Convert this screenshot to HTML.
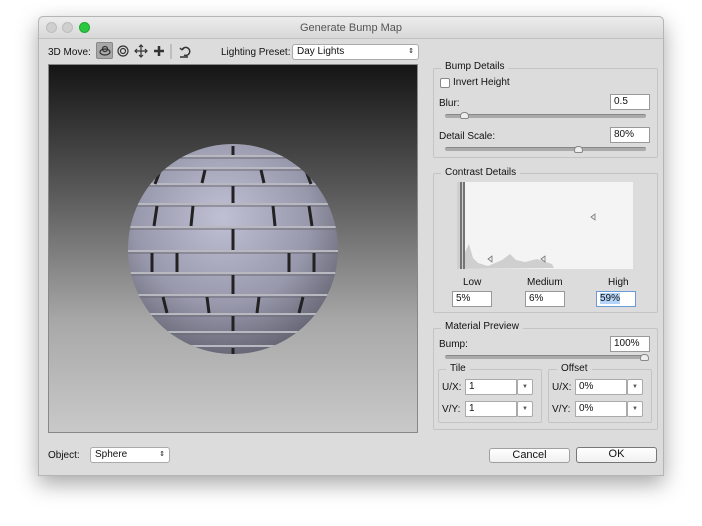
<!DOCTYPE html>
<html><head><meta charset="utf-8"><style>
*{box-sizing:border-box;margin:0;padding:0}
body{width:702px;height:526px;background:#fff;font-family:"Liberation Sans",sans-serif;font-size:10px;color:#111;position:relative;overflow:hidden}
.a{position:absolute}
.win{left:38px;top:16px;width:626px;height:460px;background:#dcdcdc;border:1px solid #b5b5b5;border-radius:5px 5px 0 0;box-shadow:0 8px 22px rgba(0,0,0,.35)}
.title{left:0;top:0;width:624px;height:22px;background:linear-gradient(#ececec,#d8d8d8);border-bottom:1px solid #c2c2c2;border-radius:5px 5px 0 0;text-align:center;line-height:22px;font-size:11px;color:#555}
.dot{width:11px;height:11px;border-radius:50%;top:5px;background:#cfcfcf;border:1px solid #bdbdbd}
.inp{background:#fff;border:1px solid #999;height:16px;line-height:14px;padding-left:3px;font-size:10px}
.grp{border:1px solid #c4c4c4;border-radius:2px}
.lg{background:#dcdcdc;padding:0 4px;font-size:10px}
.track{height:4px;background:#aaa;border-radius:2px;border-top:1px solid #888}
.thumb{width:9px;height:7px;background:#eee;border:1px solid #888;border-radius:4px 4px 2px 2px}
.sel{background:#fff;border:1px solid #aaa;border-radius:3px;height:16px;line-height:14px;padding-left:4px;font-size:10px}
.btn{background:linear-gradient(#fff,#f0f0f0);border:1px solid #a0a0a0;border-radius:3px;height:15px;line-height:13px;text-align:center;font-size:11px}
.dd{background:#fff;border:1px solid #aaa;border-radius:2px;width:16px;height:16px;text-align:center;font-size:6px;line-height:14px;color:#555}
</style></head><body>
<div class="a win">
 <div class="a title">Generate Bump Map</div>
 <div class="a dot" style="left:7px"></div><div class="a dot" style="left:23px"></div>
 <div class="a dot" style="left:40px;background:#2ac840;border-color:#1ea832"></div>

 <div class="a" style="left:9px;top:30px">3D Move:</div>
 <div class="a" style="left:57px;top:25px;width:17px;height:17px;background:#a8a8a8;border:1px solid #888;border-radius:2px"></div>
 <svg class="a" style="left:57px;top:25px" width="110" height="18" viewBox="0 0 110 18" fill="none" stroke="#333" stroke-width="1.2">
  <ellipse cx="9" cy="10" rx="5" ry="3"/><circle cx="9" cy="7" r="2.5"/>
  <circle cx="27" cy="9" r="5"/><circle cx="27" cy="9" r="2.5"/>
  <path d="M45 3v12M39 9h12M43 5l2-2 2 2M43 13l2 2 2-2M41 7l-2 2 2 2M49 7l2 2-2 2"/>
  <path d="M63 4v10M58 9h10" stroke-width="2.5"/>
  <path d="M75 2v15" stroke="#aaa"/>
  <path d="M86 8a4 4 0 1 1 2 5M86 8l-2-2M86 8l2-2M84 15h8" stroke-width="1.5"/>
 </svg>
 <div class="a" style="left:182px;top:30px">Lighting Preset:</div>
 <div class="a sel" style="left:253px;top:27px;width:127px">Day Lights<span style="position:absolute;right:4px;font-size:7px;top:0">⇕</span></div>

 <div class="a" style="left:9px;top:47px;width:370px;height:369px;border:1px solid #888;background:linear-gradient(#151515,#5a5a5a 35%,#a8a8a8 70%,#c9c9c9)">
  <svg class="a" style="left:78px;top:78px" width="212" height="212" viewBox="0 0 212 212">
   <defs><radialGradient id="g" cx="0.45" cy="0.35" r="0.7"><stop offset="0" stop-color="#c0c0d4"/><stop offset="0.6" stop-color="#9898ac"/><stop offset="1" stop-color="#5e5e6c"/></radialGradient>
   <clipPath id="c"><circle cx="106" cy="106" r="105"/></clipPath></defs>
   <circle cx="106" cy="106" r="105" fill="url(#g)"/>
   <g clip-path="url(#c)" stroke="#b8b8c0" stroke-width="2" fill="none">
    <path d="M0 13H212M0 25H212M0 41H212M0 61H212M0 84H212M0 108H212M0 130H212M0 152H212M0 171H212M0 189H212M0 203H212"/>
    <g stroke="#6a6a74" stroke-width="1"><path d="M0 15H212M0 27H212M0 43H212M0 63H212M0 86H212M0 110H212M0 132H212M0 154H212M0 173H212M0 191H212"/></g>
    <g stroke="#222" stroke-width="3">
     <path d="M106 3v9M106 43v17M106 86v21M106 132v19M106 173v15M106 205v6"/>
     <path d="M78 27l-3 13M134 27l3 13M66 63l-2 20M146 63l2 20M50 110v19M162 110v19M80 154l2 16M132 154l-2 16M30 63l-3 20M182 63l3 20M25 110v19M187 110v19M33 28l-5 13M179 28l5 13M36 154l4 16M176 154l-4 16"/>
    </g>
   </g>
  </svg>
 </div>

 <div class="a" style="left:9px;top:433px">Object:</div>
 <div class="a sel" style="left:51px;top:430px;width:80px">Sphere<span style="position:absolute;right:4px;font-size:7px">⇕</span></div>
 <div class="a btn" style="left:450px;top:431px;width:81px">Cancel</div>
 <div class="a btn" style="left:537px;top:430px;width:81px;height:16px;border-color:#777">OK</div>

 <div class="a grp" style="left:394px;top:51px;width:225px;height:90px"></div>
 <div class="a lg" style="left:402px;top:44px">Bump Details</div>
 <div class="a" style="left:401px;top:61px;width:10px;height:10px;background:#fff;border:1px solid #888;border-radius:2px"></div>
 <div class="a" style="left:414px;top:60px">Invert Height</div>
 <div class="a" style="left:400px;top:81px">Blur:</div>
 <div class="a inp" style="left:571px;top:77px;width:40px">0.5</div>
 <div class="a track" style="left:406px;top:97px;width:201px"></div>
 <div class="a thumb" style="left:421px;top:95px"></div>
 <div class="a" style="left:400px;top:114px">Detail Scale:</div>
 <div class="a inp" style="left:571px;top:110px;width:40px">80%</div>
 <div class="a track" style="left:406px;top:130px;width:201px"></div>
 <div class="a thumb" style="left:535px;top:129px"></div>

 <div class="a grp" style="left:394px;top:156px;width:225px;height:140px"></div>
 <div class="a lg" style="left:402px;top:150px">Contrast Details</div>
 <svg class="a" style="left:418px;top:165px" width="176" height="87" viewBox="0 0 176 87">
  <rect width="176" height="87" fill="#f4f4f4"/>
  <path d="M0 87V0h8v70l4-8 4 14 5 5 10 3 14-6 8-6 6 6 9 2 12-3 15 5 2 4z" fill="#cfcfcf"/>
  <path d="M4 0v87M7 0v87" stroke="#444" stroke-width="1.3"/>
  <path d="M31 77l4-3v6zM84 77l4-3v6zM134 35l4-3v6z" fill="#eee" stroke="#777" stroke-width=".8"/>
 </svg>
 <div class="a" style="left:424px;top:260px">Low</div>
 <div class="a" style="left:488px;top:260px">Medium</div>
 <div class="a" style="left:569px;top:260px">High</div>
 <div class="a inp" style="left:413px;top:274px;width:40px">5%</div>
 <div class="a inp" style="left:486px;top:274px;width:40px">6%</div>
 <div class="a inp" style="left:557px;top:274px;width:40px;border-color:#6a9ad8"><span style="background:#b4d3f8">59%</span></div>

 <div class="a grp" style="left:394px;top:311px;width:225px;height:102px"></div>
 <div class="a lg" style="left:402px;top:304px">Material Preview</div>
 <div class="a" style="left:400px;top:322px">Bump:</div>
 <div class="a inp" style="left:571px;top:319px;width:40px">100%</div>
 <div class="a track" style="left:406px;top:338px;width:201px"></div>
 <div class="a thumb" style="left:601px;top:337px"></div>
 <div class="a grp" style="left:399px;top:352px;width:104px;height:54px"></div>
 <div class="a lg" style="left:407px;top:346px">Tile</div>
 <div class="a" style="left:403px;top:365px">U/X:</div>
 <div class="a inp" style="left:426px;top:362px;width:52px;border-color:#aaa">1</div>
 <div class="a dd" style="left:478px;top:362px">▼</div>
 <div class="a" style="left:403px;top:387px">V/Y:</div>
 <div class="a inp" style="left:426px;top:384px;width:52px;border-color:#aaa">1</div>
 <div class="a dd" style="left:478px;top:384px">▼</div>
 <div class="a grp" style="left:509px;top:352px;width:104px;height:54px"></div>
 <div class="a lg" style="left:518px;top:346px">Offset</div>
 <div class="a" style="left:513px;top:365px">U/X:</div>
 <div class="a inp" style="left:536px;top:362px;width:52px;border-color:#aaa">0%</div>
 <div class="a dd" style="left:588px;top:362px">▼</div>
 <div class="a" style="left:513px;top:387px">V/Y:</div>
 <div class="a inp" style="left:536px;top:384px;width:52px;border-color:#aaa">0%</div>
 <div class="a dd" style="left:588px;top:384px">▼</div>
</div>
</body></html>
